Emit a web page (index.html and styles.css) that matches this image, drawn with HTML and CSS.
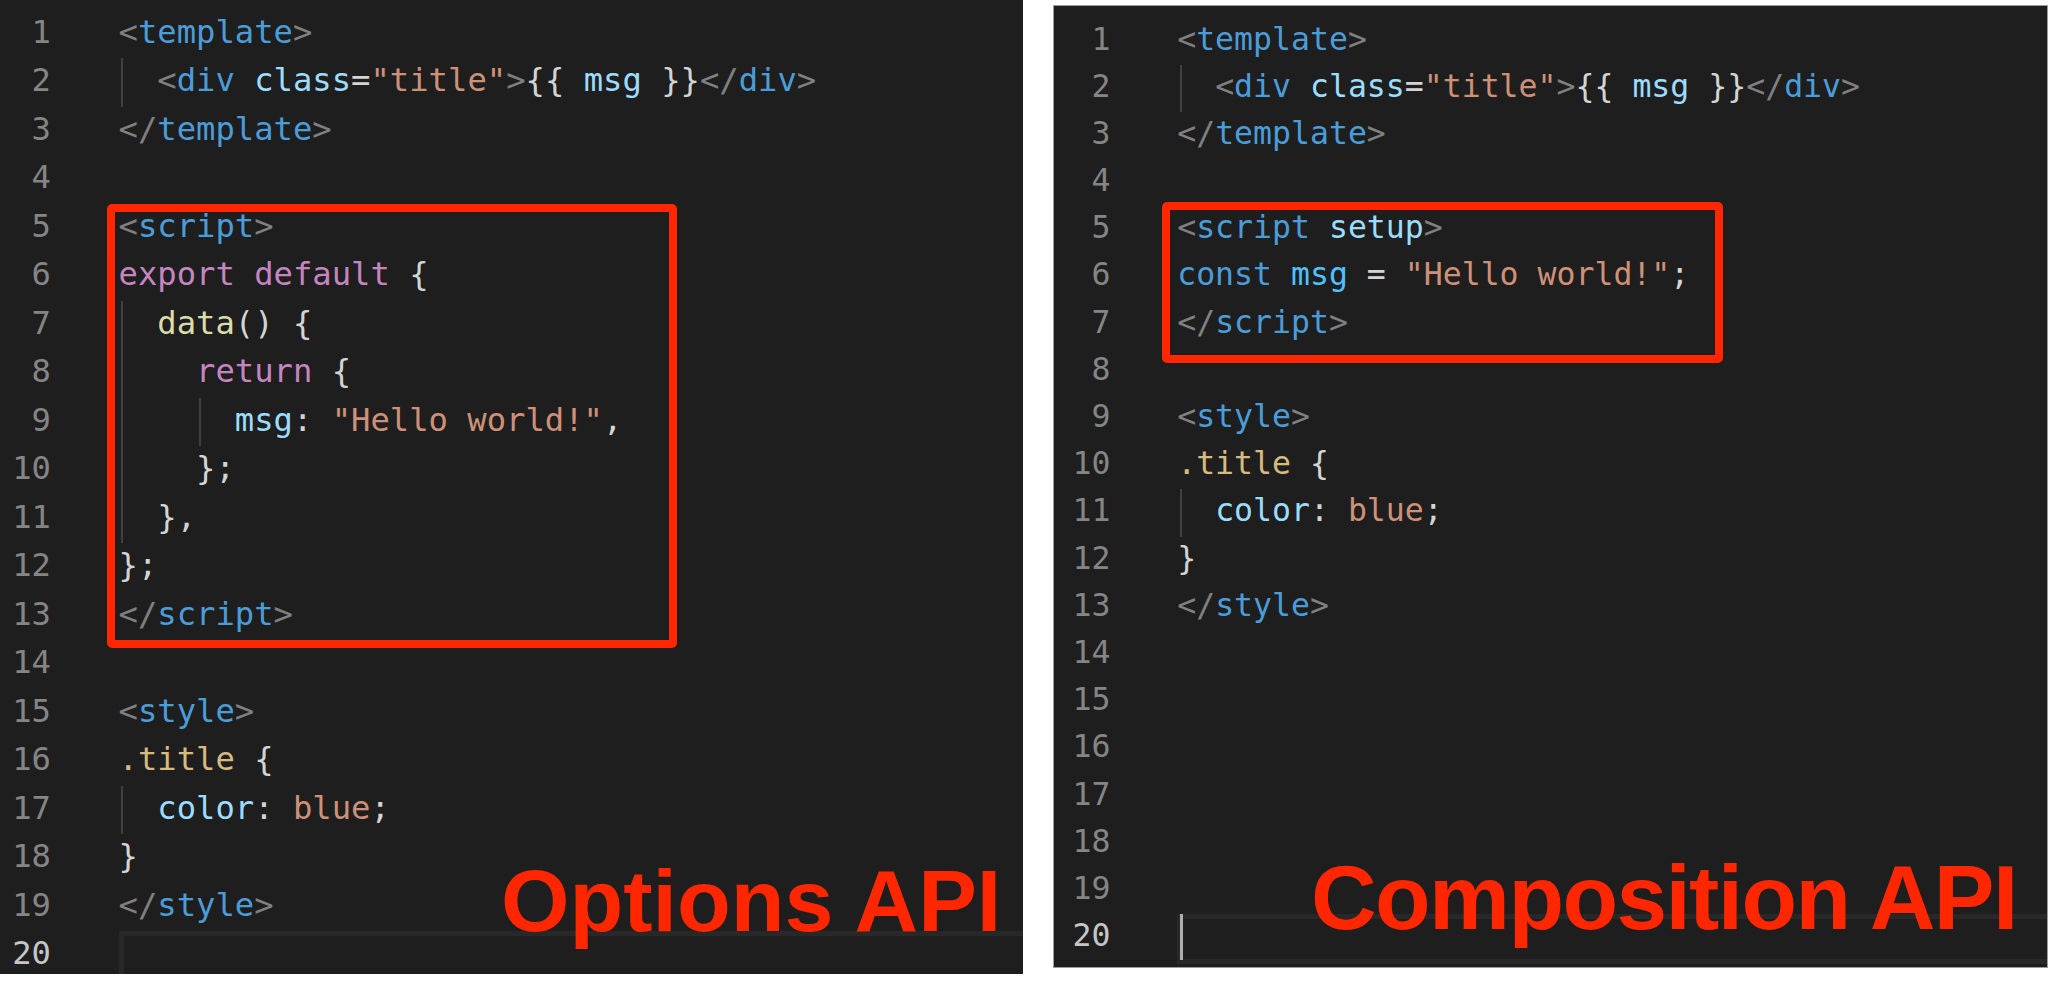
FILE: index.html
```html
<!DOCTYPE html>
<html lang="en">
<head>
<meta charset="utf-8">
<title>Options API vs Composition API</title>
<link rel="stylesheet" href="styles.css">
</head>
<body>
<main class="canvas">
  <section class="editor editor-left">
    <div class="line"><span class="ln">1</span><span class="code"><span class="p">&lt;</span><span class="t">template</span><span class="p">&gt;</span></span></div>
    <div class="line"><span class="ln">2</span><span class="code g0">  <span class="p">&lt;</span><span class="t">div</span> <span class="a">class</span><span class="d">=</span><span class="s">"title"</span><span class="p">&gt;</span><span class="d">{{ </span><span class="v">msg</span><span class="d"> }}</span><span class="p">&lt;/</span><span class="t">div</span><span class="p">&gt;</span></span></div>
    <div class="line"><span class="ln">3</span><span class="code"><span class="p">&lt;/</span><span class="t">template</span><span class="p">&gt;</span></span></div>
    <div class="line"><span class="ln">4</span><span class="code"></span></div>
    <div class="line"><span class="ln">5</span><span class="code"><span class="p">&lt;</span><span class="t">script</span><span class="p">&gt;</span></span></div>
    <div class="line"><span class="ln">6</span><span class="code"><span class="k">export</span> <span class="k">default</span> <span class="d">{</span></span></div>
    <div class="line"><span class="ln">7</span><span class="code g0">  <span class="f">data</span><span class="d">() {</span></span></div>
    <div class="line"><span class="ln">8</span><span class="code g0">    <span class="k">return</span> <span class="d">{</span></span></div>
    <div class="line"><span class="ln">9</span><span class="code g04">      <span class="v">msg</span><span class="d">: </span><span class="s">"Hello world!"</span><span class="d">,</span></span></div>
    <div class="line"><span class="ln">10</span><span class="code g0">    <span class="d">};</span></span></div>
    <div class="line"><span class="ln">11</span><span class="code g0">  <span class="d">},</span></span></div>
    <div class="line"><span class="ln">12</span><span class="code"><span class="d">};</span></span></div>
    <div class="line"><span class="ln">13</span><span class="code"><span class="p">&lt;/</span><span class="t">script</span><span class="p">&gt;</span></span></div>
    <div class="line"><span class="ln">14</span><span class="code"></span></div>
    <div class="line"><span class="ln">15</span><span class="code"><span class="p">&lt;</span><span class="t">style</span><span class="p">&gt;</span></span></div>
    <div class="line"><span class="ln">16</span><span class="code"><span class="sel">.title</span> <span class="d">{</span></span></div>
    <div class="line"><span class="ln">17</span><span class="code g0">  <span class="v">color</span><span class="d">: </span><span class="s">blue</span><span class="d">;</span></span></div>
    <div class="line"><span class="ln">18</span><span class="code"><span class="d">}</span></span></div>
    <div class="line"><span class="ln">19</span><span class="code"><span class="p">&lt;/</span><span class="t">style</span><span class="p">&gt;</span></span></div>
    <div class="line active"><span class="ln">20</span><span class="code"></span></div>

    <div class="mark mark-left"></div>
    <div class="label label-left">Options API</div>
  </section>

  <section class="editor editor-right">
    <div class="line"><span class="ln">1</span><span class="code"><span class="p">&lt;</span><span class="t">template</span><span class="p">&gt;</span></span></div>
    <div class="line"><span class="ln">2</span><span class="code g0">  <span class="p">&lt;</span><span class="t">div</span> <span class="a">class</span><span class="d">=</span><span class="s">"title"</span><span class="p">&gt;</span><span class="d">{{ </span><span class="v">msg</span><span class="d"> }}</span><span class="p">&lt;/</span><span class="t">div</span><span class="p">&gt;</span></span></div>
    <div class="line"><span class="ln">3</span><span class="code"><span class="p">&lt;/</span><span class="t">template</span><span class="p">&gt;</span></span></div>
    <div class="line"><span class="ln">4</span><span class="code"></span></div>
    <div class="line"><span class="ln">5</span><span class="code"><span class="p">&lt;</span><span class="t">script</span> <span class="a">setup</span><span class="p">&gt;</span></span></div>
    <div class="line"><span class="ln">6</span><span class="code"><span class="t">const</span> <span class="c">msg</span> <span class="d">=</span> <span class="s">"Hello world!"</span><span class="d">;</span></span></div>
    <div class="line"><span class="ln">7</span><span class="code"><span class="p">&lt;/</span><span class="t">script</span><span class="p">&gt;</span></span></div>
    <div class="line"><span class="ln">8</span><span class="code"></span></div>
    <div class="line"><span class="ln">9</span><span class="code"><span class="p">&lt;</span><span class="t">style</span><span class="p">&gt;</span></span></div>
    <div class="line"><span class="ln">10</span><span class="code"><span class="sel">.title</span> <span class="d">{</span></span></div>
    <div class="line"><span class="ln">11</span><span class="code g0">  <span class="v">color</span><span class="d">: </span><span class="s">blue</span><span class="d">;</span></span></div>
    <div class="line"><span class="ln">12</span><span class="code"><span class="d">}</span></span></div>
    <div class="line"><span class="ln">13</span><span class="code"><span class="p">&lt;/</span><span class="t">style</span><span class="p">&gt;</span></span></div>
    <div class="line"><span class="ln">14</span><span class="code"></span></div>
    <div class="line"><span class="ln">15</span><span class="code"></span></div>
    <div class="line"><span class="ln">16</span><span class="code"></span></div>
    <div class="line"><span class="ln">17</span><span class="code"></span></div>
    <div class="line"><span class="ln">18</span><span class="code"></span></div>
    <div class="line"><span class="ln">19</span><span class="code"></span></div>
    <div class="line active"><span class="ln">20</span><span class="code"><span class="cursor"></span></span></div>

    <div class="mark mark-right"></div>
    <div class="label label-right">Composition API</div>
  </section>
</main>
</body>
</html>
```

FILE: styles.css
```css
* { box-sizing: border-box; }

html, body {
  margin: 0;
  padding: 0;
  background: #ffffff;
}

.canvas {
  display: flex;
  align-items: flex-start;
  width: 2048px;
  height: 998px;
  overflow: hidden;
}

.editor {
  position: relative;
  flex: none;
  overflow: hidden;
  background: #1e1e1e;
  font-family: "DejaVu Sans Mono", monospace;
  color: #d4d4d4;
}

.editor-left {
  width: 1023px;
  height: 974px;
  padding-top: 9.5px;
  font-size: 32.2px;
}

.editor-right {
  width: 995px;
  height: 963px;
  margin-left: 30px;
  margin-top: 5px;
  padding-top: 11.5px;
  border: 1px solid #9c9c9c;
  font-size: 31.5px;
}

.line {
  display: flex;
  white-space: pre;
}

.ln {
  flex: none;
  text-align: right;
  color: #858585;
}

.code {
  flex: 1;
  white-space: pre;
}

.editor-left .ln,
.editor-left .code {
  line-height: 44px;
  padding-bottom: 4.5px;
}

.editor-right .ln,
.editor-right .code {
  line-height: 43px;
  padding-bottom: 4.2px;
}

.editor-left .ln { width: 51px; }
.editor-left .code { margin-left: 67.5px; margin-right: -20px; }

.editor-right .ln { width: 56.5px; }
.editor-right .code { margin-left: 66.7px; margin-right: -20px; }

.line.active .ln { color: #c6c6c6; }
.line.active .code { box-shadow: inset 0 0 0 5px #282828; }

/* indent guides */
.g0 {
  background: linear-gradient(#404040, #404040) 2.5px 0 / 2px 100% no-repeat;
}
.g04 {
  background:
    linear-gradient(#404040, #404040) 2.5px 0 / 2px 100% no-repeat,
    linear-gradient(#404040, #404040) calc(4ch + 2.5px) 0 / 2px 100% no-repeat;
}

.cursor {
  display: inline-block;
  width: 3px;
  height: 46px;
  margin-left: 3px;
  vertical-align: top;
  background: #aeafad;
}

/* token colours (VS Code Dark+) */
.p { color: #808080; }
.t { color: #4b9dd9; }
.a { color: #9cdcfe; }
.v { color: #9cdcfe; }
.c { color: #4fc1ff; }
.s { color: #ce9178; }
.d { color: #d4d4d4; }
.k { color: #c586c0; }
.f { color: #dcdcaa; }
.sel { color: #d7ba7d; }

/* annotations */
.mark {
  position: absolute;
  border: 8px solid #ff2600;
  border-radius: 5px;
}

.mark-left {
  left: 107px;
  top: 204px;
  width: 570px;
  height: 444px;
}

.mark-right {
  left: 108px;
  top: 196px;
  width: 561px;
  height: 161px;
}

.label {
  position: absolute;
  font-family: "Liberation Sans", Arial, sans-serif;
  font-weight: 700;
  line-height: 1;
  color: #ff2600;
  white-space: nowrap;
}

.label-left {
  left: 501px;
  top: 857px;
  font-size: 88px;
  letter-spacing: 0;
}

.label-right {
  left: 257px;
  top: 846px;
  font-size: 91px;
  letter-spacing: -1.6px;
}
```
